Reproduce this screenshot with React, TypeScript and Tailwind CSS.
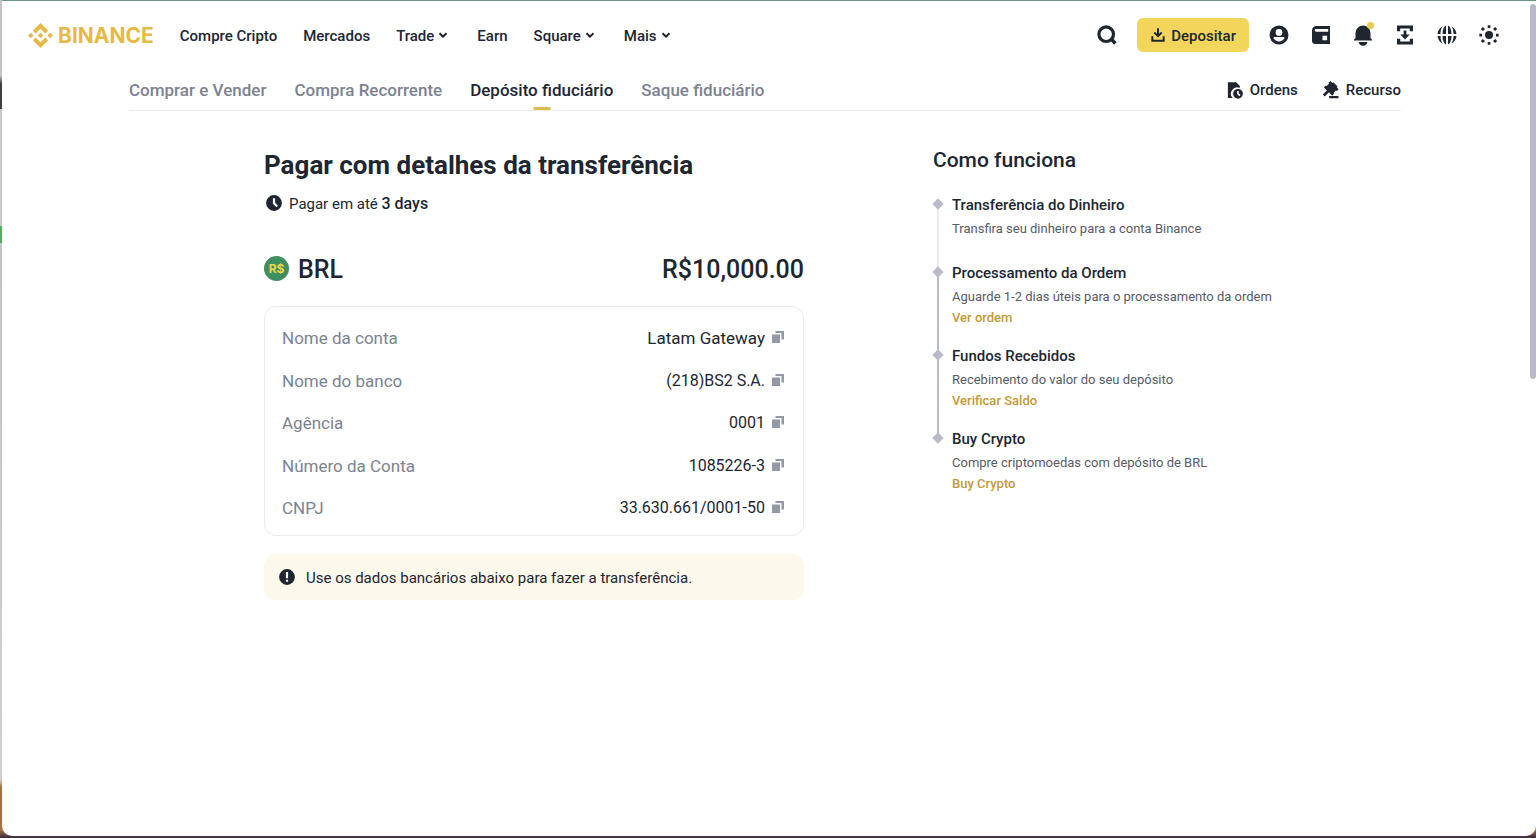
import type { ReactNode } from "react";

const menu = [
  { label: "Compre Cripto" },
  { label: "Mercados" },
  { label: "Trade", dropdown: true },
  { label: "Earn" },
  { label: "Square", dropdown: true },
  { label: "Mais", dropdown: true },
];

const tabs = [
  { label: "Comprar e Vender" },
  { label: "Compra Recorrente" },
  { label: "Depósito fiduciário", active: true },
  { label: "Saque fiduciário" },
];

const details = [
  { label: "Nome da conta", value: "Latam Gateway" },
  { label: "Nome do banco", value: "(218)BS2 S.A.", numeric: true },
  { label: "Agência", value: "0001", numeric: true },
  { label: "Número da Conta", value: "1085226-3", numeric: true },
  { label: "CNPJ", value: "33.630.661/0001-50", numeric: true },
];

const steps = [
  {
    title: "Transferência do Dinheiro",
    text: "Transfira seu dinheiro para a conta Binance",
  },
  {
    title: "Processamento da Ordem",
    text: "Aguarde 1-2 dias úteis para o processamento da ordem",
    link: "Ver ordem",
  },
  {
    title: "Fundos Recebidos",
    text: "Recebimento do valor do seu depósito",
    link: "Verificar Saldo",
  },
  {
    title: "Buy Crypto",
    text: "Compre criptomoedas com depósito de BRL",
    link: "Buy Crypto",
  },
];

function Icon({ className = "h-6 w-6", children }: { className?: string; children: ReactNode }) {
  return (
    <svg viewBox="0 0 24 24" fill="currentColor" className={`shrink-0 ${className}`} aria-hidden="true">
      {children}
    </svg>
  );
}

function IconButton({ label, children }: { label: string; children: ReactNode }) {
  return (
    <button type="button" aria-label={label} className="relative shrink-0 cursor-pointer">
      {children}
    </button>
  );
}

function Logo() {
  return (
    <a href="#" className="flex items-center gap-[5px] text-[#e6b944]">
      <Icon className="h-[25px] w-[25px]">
        <path d="M16.624 13.92l2.718 2.716-7.353 7.353-7.353-7.352 2.717-2.717 4.636 4.66 4.635-4.66zm4.637-4.636L24 12l-2.715 2.716L18.568 12l2.693-2.716zm-9.272 0l2.716 2.692-2.717 2.717L9.272 12l2.716-2.715zm-9.273 0L5.41 12l-2.692 2.692L0 12l2.716-2.716zM11.99.01l7.352 7.33-2.717 2.715-4.636-4.636-4.635 4.66-2.717-2.716L11.989.011z" />
      </Icon>
      <span className="pt-px font-[Inter,sans-serif] text-[21px] leading-6 font-bold">BINANCE</span>
    </a>
  );
}

function Header() {
  return (
    <header className="flex h-[68px] items-center justify-between pr-[27px] pl-[26px]">
      <div className="flex items-center gap-[26px]">
        <Logo />
        <nav className="flex items-center gap-[26px] pt-[2px] text-[15px] leading-6 font-medium">
          {menu.map((item) => (
            <a
              key={item.label}
              href="#"
              className={item.dropdown ? "mr-[3px] flex items-center gap-1" : ""}
            >
              {item.label}
              {item.dropdown && (
                <svg viewBox="0 0 10 10" className="h-[10px] w-[10px]" fill="none" stroke="currentColor" strokeWidth="2" aria-hidden="true">
                  <path d="M1.500 2.200 5 5.700l3.500-3.500" />
                </svg>
              )}
            </a>
          ))}
        </nav>
      </div>
      <div className="flex items-center gap-[18px]">
        <IconButton label="Buscar">
          <Icon>
            <circle cx="11.200" cy="11.200" r="7.300" fill="none" stroke="currentColor" strokeWidth="3.200" />
            <path d="M15.500 17.800l2.500-2.500 3.600 3.900-2.500 2.500z" />
          </Icon>
        </IconButton>
        <button
          type="button"
          className="flex h-[34px] cursor-pointer items-center gap-[5px] rounded-md bg-[#f3d55b] px-[13px] text-[15px] font-medium"
        >
          <Icon className="h-4 w-4">
            <path d="M10.500 2h3v8.200l3-3 2 2.100-6.500 6.400-6.500-6.400 2-2.100 3 3zM2 14h3v5h14v-5h3v8H2z" />
          </Icon>
          <span className="pt-[2px]">Depositar</span>
        </button>
        <IconButton label="Perfil">
          <Icon>
            <path fillRule="evenodd" d="M12 2.500a9.500 9.500 0 1 0 0 19 9.500 9.500 0 0 0 0-19zM12 6a3.400 3.400 0 1 1 0 6.800A3.400 3.400 0 0 1 12 6zm-5.500 9.300c0-.8.5-1.300 1.300-1.300h8.400c.8 0 1.300.5 1.300 1.300-1.200 1.900-3.200 3.200-5.500 3.200s-4.300-1.300-5.500-3.200z" />
          </Icon>
        </IconButton>
        <IconButton label="Carteira">
          <Icon>
            <path
              fillRule="evenodd"
              d="M7.500 3H21v18H6.500A3.500 3.500 0 0 1 3 17.500v-10A4.500 4.500 0 0 1 7.500 3zM7 6a1.300 1.300 0 0 0 0 2.700h12.200V6zm6.500 6.700v4.600h4.600v-4.600z"
            />
          </Icon>
        </IconButton>
        <IconButton label="Notificações">
          <Icon>
            <path d="M12 2.500A7.500 7.500 0 0 0 4.500 10v5L3 16.700v.8h18v-.8L19.500 15v-5A7.500 7.500 0 0 0 12 2.500zM7.500 19h9a4.600 4.600 0 0 1-9 0z" />
          </Icon>
          <span className="absolute -top-px right-px h-[7px] w-[7px] rounded-full bg-[#e9cb51]" />
        </IconButton>
        <IconButton label="Baixar aplicativo">
          <Icon>
            <path d="M4 2.500h16v5.700h-3.200V5.500H7.200v2.700H4zM4 15.800h3.200v2.700h9.600v-2.700H20v5.700H4zM10.600 7.500h2.800v4h3.300L12 16.500l-4.700-5h3.300z" />
          </Icon>
        </IconButton>
        <IconButton label="Idioma">
          <Icon>
            <path d="M11 2.600v8.400H7.500c.1-4.600 1.500-7.600 3.500-8.400zM13 2.600c2 .8 3.400 3.800 3.500 8.400H13zM11 13v8.400c-2-.8-3.400-3.800-3.500-8.400zM13 13h3.500c-.1 4.600-1.500 7.600-3.500 8.400zM7.500 3.600C6.100 5.500 5.500 8 5.500 11h-3c.3-3.300 2.200-6.100 5-7.400zM16.500 3.600c2.800 1.300 4.700 4.100 5 7.400h-3c0-3-.6-5.500-2-7.400zM2.500 13h3c0 3 .6 5.500 2 7.400-2.800-1.300-4.700-4.100-5-7.400zM18.500 13h3c-.3 3.300-2.200 6.100-5 7.400 1.400-1.900 2-4.400 2-7.400z" />
          </Icon>
        </IconButton>
        <IconButton label="Tema">
          <Icon>
            <circle cx="12" cy="12" r="4" />
            <path d="M10.700 2.300h2.700V5h-2.700zM10.700 19h2.700v2.700h-2.700zM2.300 10.700H5v2.700H2.300zM19 10.700h2.700v2.700H19z" />
            <path d="M5.900 3.900L8 6 5.900 8.100 3.800 6zM18.100 3.900l2.100 2.100-2.100 2.100L16 6zM5.900 15.900L8 18l-2.100 2.100L3.800 18zM18.100 15.900l2.100 2.100-2.100 2.100L16 18z" />
          </Icon>
        </IconButton>
      </div>
    </header>
  );
}

function SubNav() {
  return (
    <div className="mx-auto flex h-[42px] w-full max-w-[1272px] items-stretch justify-between border-b border-[#ececee] font-medium">
      <nav className="flex gap-7 text-[17px]">
        {tabs.map((tab) => (
          <a
            key={tab.label}
            href="#"
            aria-current={tab.active ? "page" : undefined}
            className={
              tab.active
                ? "relative flex items-center pt-[3px]"
                : "flex items-center pt-[3px] text-[#7d8290]"
            }
          >
            {tab.label}
            {tab.active && (
              <span className="absolute bottom-0 left-1/2 h-[3px] w-[17px] -translate-x-1/2 bg-[#dcbc4c]" />
            )}
          </a>
        ))}
      </nav>
      <div className="flex items-center gap-6 text-[15px]">
        <a href="#" className="flex items-center gap-[6px]">
          <Icon className="h-[18px] w-[18px]">
            <path d="M2.500 1.500h11l5 5v2.600A8.500 8.500 0 0 0 8.700 22.500H2.500z" />
            <path fillRule="evenodd" d="M16 10.500a6.500 6.500 0 1 0 0 13 6.500 6.500 0 0 0 0-13zm-1.200 2.800h2.200v3.200l2.400 2.200-1.500 1.600-3.100-2.900z" />
          </Icon>
          <span className="pt-[2px]">Ordens</span>
        </a>
        <a href="#" className="flex items-center gap-[6px]">
          <Icon className="h-[18px] w-[18px]">
            <path d="M11.300 0l2.500 2.500 1.400-.8 5.500 5.500-.8 1.400 2.300 2.300-2.500 2.500-1.200-.8-3.200 3.200.8 1.200-2.500 2.500-4.400-4.400-5.600 5.500-2.500-2.500 5.500-5.600L2.500 8.500 5 6l1.200.8 3.200-3.200-.8-1.200zM9.500 20H22v3H9.500z" />
          </Icon>
          <span className="pt-[2px]">Recurso</span>
        </a>
      </div>
    </div>
  );
}

function TransferDetails() {
  return (
    <section className="w-[540px]">
      <h1 className="pt-px text-[26px] leading-9 font-bold">Pagar com detalhes da transferência</h1>
      <p className="mt-[7px] flex items-center gap-[5px] text-[15px] leading-6">
        <Icon className="h-5 w-5">
          <path fillRule="evenodd" d="M12 2.500a9.500 9.500 0 1 0 0 19 9.500 9.500 0 0 0 0-19zm-1.300 3.700h2.600v5.500l3.500 3.500-1.800 1.800-4.300-4.200z" />
        </Icon>
        <span className="pt-[2px]">
          Pagar em até <strong className="text-[16px] font-medium">3 days</strong>
        </span>
      </p>

      <div className="mt-[35px] flex items-center justify-between text-[25px] leading-8 font-medium">
        <div className="flex items-center gap-[9px]">
          <span className="flex h-[25px] w-[25px] items-center justify-center rounded-full bg-[#3f8f60] font-[Inter,sans-serif] text-[12px] leading-none font-bold text-[#e6d84a]">
            R$
          </span>
          <span className="pt-[3px]">BRL</span>
        </div>
        <span className="pt-[3px]">R$10,000.00</span>
      </div>

      <dl className="mt-5 flex min-h-[230px] flex-col justify-between rounded-xl border border-[#ebebed] px-[17px] pt-[19px] pb-[15px] text-[17px] leading-6">
        {details.map((item) => (
          <div key={item.label} className="flex items-center justify-between">
            <dt className="text-[#7d8290]">{item.label}</dt>
            <dd className={`flex items-center gap-[7px] ${item.numeric ? "text-[16px] leading-6" : ""}`}>
              {item.value}
              <button
                type="button"
                aria-label={`Copiar ${item.label}`}
                className="mr-[2px] cursor-pointer pb-[2px] text-[#9298a5]"
              >
                <svg viewBox="0 0 12 12" fill="currentColor" className="h-3 w-3" aria-hidden="true">
                  <path d="M0 3.500h8V12H0zM3.500 0H12v8.500H9.500V2h-6z" />
                </svg>
              </button>
            </dd>
          </div>
        ))}
      </dl>

      <div className="mt-[18px] flex h-[46px] items-center gap-[9px] rounded-xl bg-[#fcf8eb] px-[13px] text-[15px]">
        <Icon className="h-5 w-5">
          <path fillRule="evenodd" d="M12 2.500a9.500 9.500 0 1 0 0 19 9.500 9.500 0 0 0 0-19zM10.700 6h2.600v7.500h-2.600zm0 9.200h2.600v2.600h-2.600z" />
        </Icon>
        <span className="pt-[2px]">Use os dados bancários abaixo para fazer a transferência.</span>
      </div>
    </section>
  );
}

function HowItWorks() {
  return (
    <aside className="w-[333px]">
      <h2 className="text-[21px] leading-7 font-medium">Como funciona</h2>
      <ol className="mt-[19px]">
        {steps.map((step, i) => (
          <li key={step.title} className="flex gap-[10px]">
            <div className="flex w-[9px] shrink-0 flex-col items-center pt-[7px]">
              <span className="h-2 w-2 shrink-0 rotate-45 bg-[#b9bcc8]" />
              {i < steps.length - 1 && (
                <span className={`-mb-2 w-[2px] flex-1 ${i === 0 ? "bg-[#e9eaed]" : "bg-[#b9bcc8]"}`} />
              )}
            </div>
            <div className={step.link ? "pb-4" : "pb-[22px]"}>
              <h3 className="text-[15px] leading-6 font-medium">{step.title}</h3>
              <p className="mt-px text-[13px] leading-[21px] whitespace-nowrap text-[#575b66]">{step.text}</p>
              {step.link && (
                <a href="#" className="block text-[13px] leading-[21px] font-medium text-[#c29a35]">
                  {step.link}
                </a>
              )}
            </div>
          </li>
        ))}
      </ol>
    </aside>
  );
}

export default function App() {
  return (
    <div className="min-h-screen bg-[linear-gradient(#c4c4c4_9%,#3f3f3f_10%,#3f3f3f_13%,#cacaca_13%,#cacaca_27%,#4fae62_27%,#4fae62_29%,#c4c4c4_29%,#d0d0d0_93%,#a8703c_94%,#a8703c_99%,#3a2a45)] pb-[2px] pl-[2px] font-[Roboto,'Noto_Sans',sans-serif] text-[#202630]">
      <div className="flex min-h-[calc(100vh-2px)] overflow-hidden rounded-b-[10px] border-t border-[#6f9482] bg-white">
        <div className="min-w-0 flex-1">
          <Header />
          <SubNav />
          <main className="mx-auto flex w-full max-w-[1002px] justify-between pt-[35px]">
            <TransferDetails />
            <HowItWorks />
          </main>
        </div>
        <div className="flex w-2 justify-end pt-[3px]" aria-hidden="true">
          <div className="h-[375px] w-[6px] rounded-full bg-[#b9bac6]" />
        </div>
      </div>
    </div>
  );
}
